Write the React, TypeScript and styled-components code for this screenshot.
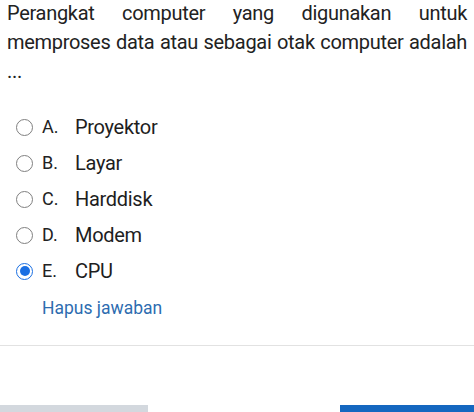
import React from 'react';
import styled, { createGlobalStyle } from 'styled-components';

const GlobalStyle = createGlobalStyle`
  html, body {
    margin: 0;
    padding: 0;
    background: #ffffff;
  }
  body {
    font-family: Roboto, "Liberation Sans", Arial, sans-serif;
    color: #202020;
  }
`;

const Page = styled.div`
  display: flex;
  flex-direction: column;
  padding: 0 7px;
`;

const Question = styled.p`
  margin: -1px 0 0;
  font-size: 20px;
  line-height: 29px;
  letter-spacing: -0.3px;
  text-align: justify;
  color: #222222;
`;

const OptionList = styled.div`
  display: flex;
  flex-direction: column;
  margin-top: 23px;
`;

const OptionRow = styled.label`
  display: flex;
  align-items: center;
  height: 36px;
  padding-left: 9px;
  cursor: pointer;
`;

const Radio = styled.span<{ $checked: boolean }>`
  box-sizing: border-box;
  width: 17px;
  height: 17px;
  border-radius: 50%;
  border: 1.5px solid ${(p) => (p.$checked ? '#1a6fe3' : '#808080')};
  display: flex;
  align-items: center;
  justify-content: center;
  flex-shrink: 0;

  &::after {
    content: '';
    width: 10px;
    height: 10px;
    border-radius: 50%;
    background: ${(p) => (p.$checked ? '#1a6fe3' : 'transparent')};
  }
`;

const Letter = styled.span`
  width: 33px;
  margin-left: 9px;
  font-size: 18px;
  color: #222222;
  transform: translateY(-1px);
`;

const OptionText = styled.span`
  font-size: 20px;
  letter-spacing: -0.3px;
  color: #1e1e1e;
`;

const ClearLink = styled.a`
  margin: 7px 0 0 35px;
  font-size: 17.5px;
  line-height: 24px;
  color: #2d6cb0;
  cursor: pointer;
`;

const Divider = styled.hr`
  margin: 25px -7px 0;
  border: none;
  border-top: 1px solid #e2e2e2;
`;

const Footer = styled.div`
  display: flex;
  justify-content: space-between;
  margin: 59px -7px 0;
`;

const NavButton = styled.button<{ $primary?: boolean }>`
  width: ${(p) => (p.$primary ? '134px' : '148px')};
  height: 44px;
  border: none;
  padding: 0;
  background: ${(p) => (p.$primary ? '#1467c0' : '#d3d8de')};
`;

const options = [
  { key: 'A', text: 'Proyektor' },
  { key: 'B', text: 'Layar' },
  { key: 'C', text: 'Harddisk' },
  { key: 'D', text: 'Modem' },
  { key: 'E', text: 'CPU' },
];

export default function App() {
  const [selected, setSelected] = React.useState<string | null>('E');

  return (
    <>
      <GlobalStyle />
      <Page>
        <Question>
          Perangkat computer yang digunakan untuk memproses data atau sebagai otak computer adalah ...
        </Question>
        <OptionList>
          {options.map((o) => (
            <OptionRow key={o.key} onClick={() => setSelected(o.key)}>
              <Radio $checked={selected === o.key} />
              <Letter>{o.key}.</Letter>
              <OptionText>{o.text}</OptionText>
            </OptionRow>
          ))}
        </OptionList>
        <ClearLink onClick={() => setSelected(null)}>Hapus jawaban</ClearLink>
        <Divider />
        <Footer>
          <NavButton aria-label="previous" />
          <NavButton $primary aria-label="next" />
        </Footer>
      </Page>
    </>
  );
}
